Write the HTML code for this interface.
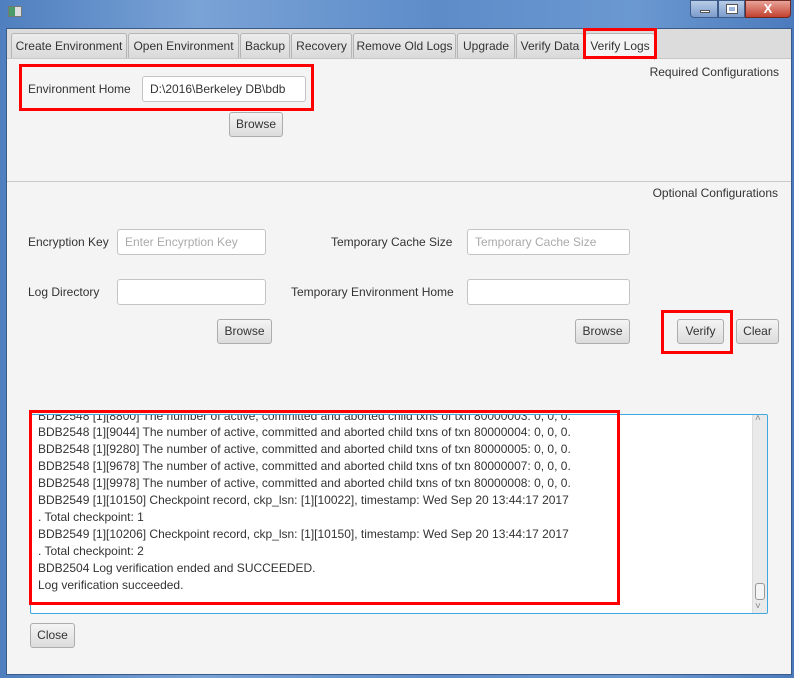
<!DOCTYPE html>
<html><head><meta charset="utf-8"><style>
*{margin:0;padding:0;box-sizing:border-box}
body{width:794px;height:678px;overflow:hidden;position:relative;font-family:"Liberation Sans",sans-serif;font-size:12px;color:#333;background:linear-gradient(90deg,#4f7fbf 0%,#7aa3d6 25%,#5d8cc9 55%,#6b98d0 80%,#4b7bbd 100%)}
.a{position:absolute;white-space:nowrap}
.panel{position:absolute;left:6px;top:28px;width:786px;height:647px;background:#f4f4f4;border:1px solid #3c5a88}
.tabbar{position:absolute;left:7px;top:29px;width:784px;height:30px;background:#dcdcdc;border-bottom:1px solid #c8c8c8}
.tab{position:absolute;top:33px;height:25px;background:linear-gradient(#ececec,#dadada);border:1px solid #b5b5b5;border-bottom:none;border-radius:3px 3px 0 0;text-align:center;line-height:24px;color:#333}
.inp{position:absolute;background:#fff;border:1px solid #c4c4c4;border-radius:3px;height:26px;line-height:24px;padding-left:7px;color:#333}
.btn{position:absolute;height:25px;border:1px solid #adadad;border-radius:3px;background:linear-gradient(#f4f4f4,#dcdcdc);text-align:center;line-height:23px;color:#333}
.red{position:absolute;border:3px solid #f00}
.log{position:absolute;left:30px;top:414px;width:738px;height:200px;background:#fff;border:1px solid #3fa8e0;border-radius:2px;overflow:hidden}
.log div{position:absolute;left:7px;font-size:12px;color:#333;white-space:nowrap}
</style></head><body>
<div class="a" style="left:8px;top:6px;width:14px;height:11px;background:linear-gradient(90deg,#4a9a6a 0 50%,#ddd 50%);border:1px solid #777"></div>
<div class="a" style="left:690px;top:0;width:28px;height:18px;background:linear-gradient(#b7cbe6,#7d9ccc);border:1px solid #3e5c8a;border-radius:0 0 0 4px"><div style="position:absolute;left:9px;top:9px;width:10px;height:3px;background:#fff;border:1px solid #555"></div></div>
<div class="a" style="left:718px;top:0;width:27px;height:18px;background:linear-gradient(#b7cbe6,#7d9ccc);border:1px solid #3e5c8a"><div style="position:absolute;left:8px;top:4px;width:10px;height:8px;border:2px solid #fff;outline:1px solid #555"></div></div>
<div class="a" style="left:745px;top:0;width:46px;height:18px;background:linear-gradient(#e8a49a,#c3412e);border:1px solid #6e2a22;border-radius:0 0 4px 0;color:#fff;font-weight:bold;font-size:13px;text-align:center;line-height:16px">X</div>
<div class="panel"></div>
<div class="tabbar"></div>
<div class="tab" style="left:11px;width:116px">Create Environment</div>
<div class="tab" style="left:128px;width:111px">Open Environment</div>
<div class="tab" style="left:240px;width:50px">Backup</div>
<div class="tab" style="left:291px;width:61px">Recovery</div>
<div class="tab" style="left:353px;width:103px">Remove Old Logs</div>
<div class="tab" style="left:457px;width:58px">Upgrade</div>
<div class="tab" style="left:516px;width:68px">Verify Data</div>
<div class="tab" style="left:585px;width:70px;height:27px;background:#f4f4f4">Verify Logs</div>
<div class="red" style="left:583px;top:28px;width:74px;height:31px"></div>
<div class="a" style="right:15px;top:65px">Required Configurations</div>
<div class="a" style="left:28px;top:82px">Environment Home</div>
<div class="inp" style="left:142px;top:76px;width:164px">D:\2016\Berkeley DB\bdb</div>
<div class="red" style="left:19px;top:64px;width:295px;height:47px"></div>
<div class="btn" style="left:229px;top:112px;width:54px">Browse</div>
<div class="a" style="left:7px;top:181px;width:784px;height:1px;background:#c9c9c9"></div>
<div class="a" style="right:16px;top:186px">Optional Configurations</div>
<div class="a" style="left:28px;top:235px">Encryption Key</div>
<div class="inp" style="left:117px;top:229px;width:149px;color:#aaa">Enter Encyrption Key</div>
<div class="a" style="left:331px;top:235px">Temporary Cache Size</div>
<div class="inp" style="left:467px;top:229px;width:163px;color:#aaa">Temporary Cache Size</div>
<div class="a" style="left:28px;top:285px">Log Directory</div>
<div class="inp" style="left:117px;top:279px;width:149px"></div>
<div class="a" style="left:291px;top:285px">Temporary Environment Home</div>
<div class="inp" style="left:467px;top:279px;width:163px"></div>
<div class="btn" style="left:217px;top:319px;width:55px">Browse</div>
<div class="btn" style="left:575px;top:319px;width:55px">Browse</div>
<div class="btn" style="left:677px;top:319px;width:47px">Verify</div>
<div class="btn" style="left:736px;top:319px;width:43px">Clear</div>
<div class="red" style="left:661px;top:310px;width:72px;height:44px"></div>
<div class="log">
<div style="top:-6px">BDB2548 [1][8800] The number of active, committed and aborted child txns of txn 80000003: 0, 0, 0.</div>
<div style="top:10px">BDB2548 [1][9044] The number of active, committed and aborted child txns of txn 80000004: 0, 0, 0.</div>
<div style="top:27px">BDB2548 [1][9280] The number of active, committed and aborted child txns of txn 80000005: 0, 0, 0.</div>
<div style="top:44px">BDB2548 [1][9678] The number of active, committed and aborted child txns of txn 80000007: 0, 0, 0.</div>
<div style="top:61px">BDB2548 [1][9978] The number of active, committed and aborted child txns of txn 80000008: 0, 0, 0.</div>
<div style="top:78px">BDB2549 [1][10150] Checkpoint record, ckp_lsn: [1][10022], timestamp: Wed Sep 20 13:44:17 2017</div>
<div style="top:95px">. Total checkpoint: 1</div>
<div style="top:112px">BDB2549 [1][10206] Checkpoint record, ckp_lsn: [1][10150], timestamp: Wed Sep 20 13:44:17 2017</div>
<div style="top:129px">. Total checkpoint: 2</div>
<div style="top:146px">BDB2504 Log verification ended and SUCCEEDED.</div>
<div style="top:163px">Log verification succeeded.</div>
<div style="left:721px;top:0;width:16px;height:198px;background:#eaeaea;border-left:1px solid #ddd"></div>
<div style="left:724px;top:168px;width:10px;height:17px;background:#f4f4f4;border:1px solid #999;border-radius:3px"></div>
<div style="left:724px;top:-2px;font-size:10px;color:#888">˄</div>
<div style="left:724px;top:186px;font-size:10px;color:#888">˅</div>
</div>
<div class="red" style="left:29px;top:410px;width:591px;height:195px"></div>
<div class="btn" style="left:30px;top:623px;width:45px">Close</div>
</body></html>
